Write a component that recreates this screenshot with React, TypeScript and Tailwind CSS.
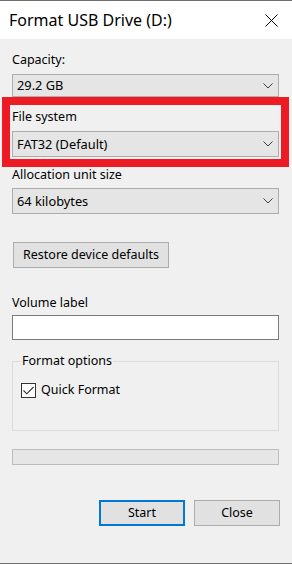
import React from 'react';

const font = { fontFamily: '"Noto Sans", "Segoe UI", sans-serif' };

function Chevron() {
  return (
    <svg width="10" height="6" viewBox="0 0 10 6" className="shrink-0">
      <path d="M0.5 0.5 L5 5 L9.5 0.5" fill="none" stroke="#3c3c3c" strokeWidth="1" />
    </svg>
  );
}

function Select({ value, h = 'h-[26px]' }: { value: string; h?: string }) {
  return (
    <div className={`${h} flex items-center justify-between border border-[#adadad] bg-[#e5e5e5] pl-[4px] pr-[5px]`}>
      <span className="text-[12.8px] leading-none text-black">{value}</span>
      <Chevron />
    </div>
  );
}

function Label({ children }: { children: React.ReactNode }) {
  return <div className="h-[16px] text-[12.5px] leading-[16px] text-black">{children}</div>;
}

export default function App() {
  return (
    <div className="flex h-[564px] w-[292px] flex-col border-t border-b border-[#6f6f6f] bg-[#f0f0f0]" style={font}>
      {/* title bar */}
      <div className="flex h-[38px] shrink-0 items-center justify-between bg-white pl-[9px] pr-[14px]">
        <span className="text-[16px] text-black">Format USB Drive (D:)</span>
        <svg width="13" height="13" viewBox="0 0 13 13">
          <path d="M0.5 0.5 L12.5 12.5 M12.5 0.5 L0.5 12.5" stroke="#000" strokeWidth="1" />
        </svg>
      </div>

      <div className="flex flex-col pl-[12px] pr-[13px]">
        <div className="mt-[13px]">
          <Label>Capacity:</Label>
        </div>
        <div className="mt-[6px]">
          <Select value="29.2 GB" h="h-[23px]" />
        </div>

        {/* highlighted file system box */}
        <div className="-mx-[10px] flex flex-col border-[8px] border-[#ed1c24] px-[2px] pt-[4px] pb-[2px]">
          <Label>File system</Label>
          <div className="mt-[6px]">
            <Select value="FAT32 (Default)" />
          </div>
        </div>

        <Label>Allocation unit size</Label>
        <div className="mt-[5px]">
          <Select value="64 kilobytes" />
        </div>

        <div className="mt-[28px] flex">
          <button className="ml-[1px] h-[26px] w-[156px] border border-[#adadad] bg-[#e1e1e1] text-[12.5px] text-black">
            Restore device defaults
          </button>
        </div>

        <div className="mt-[27px]">
          <Label>Volume label</Label>
        </div>
        <div className="mt-[4px] h-[25px] border border-[#7a7a7a] bg-white" />

        {/* format options group */}
        <div className="relative mt-[21px] h-[70px] border border-[#dcdcdc] pl-[8px] pt-[20px]">
          <span className="absolute -top-[9px] left-[8px] bg-[#f0f0f0] px-[1px] text-[12.5px] leading-[16px] text-black">
            Format options
          </span>
          <div className="flex items-center gap-[5px]">
            <div className="flex h-[15px] w-[15px] items-center justify-center border border-[#333] bg-white">
              <svg width="11" height="9" viewBox="0 0 11 9">
                <path d="M0.5 4.5 L3.8 7.8 L10.5 1" fill="none" stroke="#333" strokeWidth="1.1" />
              </svg>
            </div>
            <span className="text-[12.5px] leading-[16px] text-black">Quick Format</span>
          </div>
        </div>

        {/* progress bar */}
        <div className="mt-[18px] h-[16px] border border-[#bcbcbc] bg-[#e6e6e6]" />

        <div className="-mr-[1px] mt-[35px] flex justify-end gap-[9px]">
          <button className="h-[26px] w-[86px] border-2 border-[#0078d7] bg-[#e1e1e1] text-[12.5px] text-black">
            Start
          </button>
          <button className="h-[26px] w-[86px] border border-[#adadad] bg-[#e1e1e1] text-[12.5px] text-black">
            Close
          </button>
        </div>
      </div>
    </div>
  );
}
